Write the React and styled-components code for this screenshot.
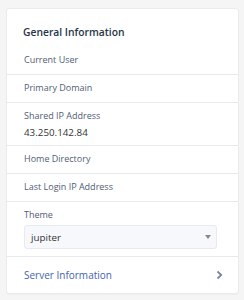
import React from 'react';
import styled, { createGlobalStyle } from 'styled-components';

const GlobalStyle = createGlobalStyle`
  html, body {
    margin: 0;
    padding: 0;
    background: #f5f5f5;
    font-family: "Open Sans", "Noto Sans", sans-serif;
  }
`;

const Page = styled.div`
  width: 244px;
  height: 300px;
  box-sizing: border-box;
  padding: 8px 5px 0 6px;
`;

const Card = styled.div`
  background: #fff;
  border: 1px solid #ebebeb;
  border-radius: 3px;
  box-shadow: 0 1px 1px rgba(0, 0, 0, 0.03);
`;

const Header = styled.div`
  padding: 14px 16px 6px;
  font-size: 10.3px;
  line-height: 18px;
  font-weight: 600;
  color: #253447;
`;

const Row = styled.div`
  padding: 6px 17px 7px;
  border-top: ${(p) => (p.$first ? 'none' : '1px solid #e9e9e9')};
`;

const Label = styled.div`
  font-size: 9px;
  line-height: 14px;
  color: #515d75;
`;

const Value = styled.div`
  margin-top: 1px;
  margin-bottom: -4px;
  font-size: 9.8px;
  line-height: 18px;
  color: #333;
`;

const Select = styled.div`
  margin: 3px 4px 0 0;
  height: 24px;
  box-sizing: border-box;
  display: flex;
  align-items: center;
  justify-content: space-between;
  padding: 0 5px 0 6px;
  background: #f7f8fb;
  border: 1px solid #e7eaf0;
  border-radius: 3px;
  font-size: 9.8px;
  color: #333;
`;

const Caret = styled.span`
  width: 0;
  height: 0;
  border-left: 3px solid transparent;
  border-right: 3px solid transparent;
  border-top: 4px solid #888;
`;

const LinkRow = styled.div`
  display: flex;
  align-items: center;
  justify-content: space-between;
  padding: 10px 15px 10px 17px;
  border-top: 1px solid #e9e9e9;
  font-size: 10px;
  line-height: 16px;
  color: #4563ad;
`;

const rows = [
  { label: 'Current User' },
  { label: 'Primary Domain' },
  { label: 'Shared IP Address', value: '43.250.142.84' },
  { label: 'Home Directory' },
  { label: 'Last Login IP Address' },
];

export default function App() {
  return (
    <>
      <GlobalStyle />
      <Page>
        <Card>
          <Header>General Information</Header>
          {rows.map((r, i) => (
            <Row key={r.label} $first={i === 0}>
              <Label>{r.label}</Label>
              {r.value && <Value>{r.value}</Value>}
            </Row>
          ))}
          <Row>
            <Label>Theme</Label>
            <Select>
              jupiter
              <Caret />
            </Select>
          </Row>
          <LinkRow>
            Server Information
            <svg width="7" height="10" viewBox="0 0 7 10">
              <path d="M1.5 1.5 L5.2 5 L1.5 8.5" fill="none" stroke="#7d879c" strokeWidth="1.8" />
            </svg>
          </LinkRow>
        </Card>
      </Page>
    </>
  );
}
